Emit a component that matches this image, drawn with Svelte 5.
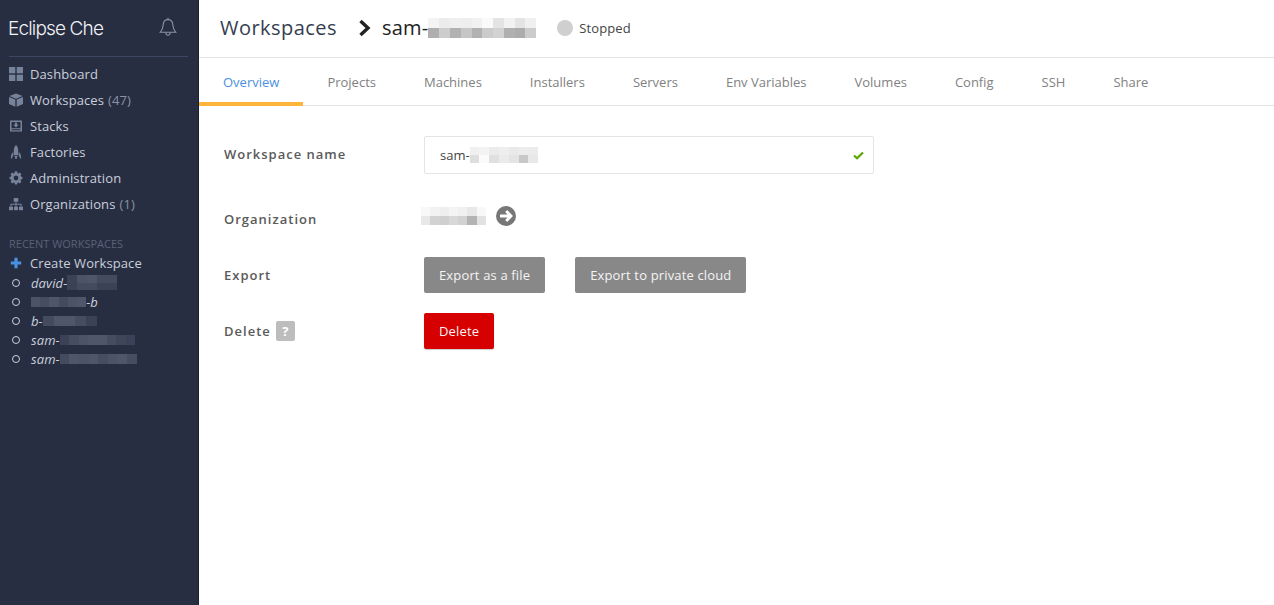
<script>
	const mainNav = [
		{ label: 'Dashboard', icon: 'dashboard' },
		{ label: 'Workspaces', count: '(47)', icon: 'cube' },
		{ label: 'Stacks', icon: 'stack' },
		{ label: 'Factories', icon: 'rocket' },
		{ label: 'Administration', icon: 'gear' },
		{ label: 'Organizations', count: '(1)', icon: 'org' }
	];

	const tabs = ['Overview', 'Projects', 'Machines', 'Installers', 'Servers', 'Env Variables', 'Volumes', 'Config', 'SSH', 'Share'];

	// blurred-out names: each row is a list of cell colours
	const dark = ['#3b4156', '#454b5f', '#4d5366', '#50566a', '#474d61', '#3f455a'];
	const recent = [
		{ before: 'david-', after: '', rows: [[dark[0], dark[2], dark[3], dark[1], dark[1]], [dark[0], dark[1], dark[1], dark[0], dark[0]]], w: 10, h: 7.5 },
		{ before: '', after: '-b', rows: [[dark[2], dark[4], dark[3], dark[1], dark[2], dark[3]]], w: 9.2, h: 10 },
		{ before: 'b-', after: '', rows: [[dark[1], dark[3], dark[3], dark[4], dark[0]]], w: 10.8, h: 10 },
		{ before: 'sam-', after: '', rows: [[dark[0], dark[4], dark[2], dark[3], dark[3], dark[4], dark[5], dark[0]]], w: 9.4, h: 10 },
		{ before: 'sam-', after: '', rows: [[dark[1], dark[3], dark[2], dark[3], dark[4], dark[2], dark[3], dark[4]]], w: 9.6, h: 10 }
	];

	const titleBlur = [
		['#f4f4f4', '#ececec', '#efefef', '#eeeeee', '#f2f2f2', '#fafafa', '#e4e4e4', '#f2f2f2', '#e4e4e4', '#f0f0f0'],
		['#afafaf', '#cdcdcd', '#b2b2b2', '#c6c6c6', '#b2b2b2', '#cbcbcb', '#d2d2d2', '#b0b0b0', '#acacac', '#cccccc']
	];
	const inputBlur = [
		['#f0f0f0', '#f3f3f3', '#ebebeb', '#eeeeee', '#e9e9e9', '#ececec', '#ebebeb'],
		['#dedede', '#fbfbfb', '#e0e0e0', '#ebebeb', '#e4e4e4', '#c8c8c8', '#e8e8e8']
	];
	const orgBlur = [
		['#f8f8f8', '#f2f2f2', '#eeeeee', '#f4f4f4', '#f0f0f0', '#e8e8e8', '#f8f8f8'],
		['#e8e8e8', '#d2d2d2', '#cfcfcf', '#d8d8d8', '#d2d2d2', '#b4b4b4', '#e2e2e2']
	];
</script>

{#snippet mosaic(rows, w, h)}
	<span class="mosaic">
		{#each rows as row}
			<span class="mosaic-row">
				{#each row as color}
					<i style="background:{color};width:{w}px;height:{h}px"></i>
				{/each}
			</span>
		{/each}
	</span>
{/snippet}

{#snippet navIcon(name)}
	<svg class="nav-icon" viewBox="0 0 14 14" width="14" height="14" fill="#76839a">
		{#if name === 'dashboard'}
			<rect x="0" y="0" width="6.3" height="6.3" />
			<rect x="7.7" y="0" width="6.3" height="6.3" />
			<rect x="0" y="7.7" width="6.3" height="6.3" />
			<rect x="7.7" y="7.7" width="6.3" height="6.3" />
		{:else if name === 'cube'}
			<path d="M7 0.4 13.6 3 7 5.7 0.4 3Z" />
			<path d="M0 4 6.3 6.6V13.8L0 10.9Z" />
			<path d="M14 4 7.7 6.6V13.8L14 10.9Z" />
		{:else if name === 'stack'}
			<path fill-rule="evenodd" d="M1.5 1.5H12.5Q13 1.5 13 2V12Q13 12.5 12.5 12.5H1.5Q1 12.5 1 12V2Q1 1.5 1.5 1.5ZM2.5 3V9.2H11.5V3ZM2.5 10.3V11.3H11.5V10.3Z" />
			<path d="M5.9 3.6H8.1V5.7H9.6L7 8.4 4.4 5.7H5.9Z" />
		{:else if name === 'rocket'}
			<path d="M7 0C8.6 1.6 9.2 3.6 9.2 5.6V10.2H4.8V5.6C4.8 3.6 5.4 1.6 7 0Z" />
			<path d="M4.2 6.8V10.6L2.8 13.6H1.8L2.4 9.6Z" />
			<path d="M9.8 6.8V10.6L11.2 13.6H12.2L11.6 9.6Z" />
			<path d="M5.6 11H8.4L7.6 14H6.4Z" />
		{:else if name === 'gear'}
			<path fill-rule="evenodd" d="M5.8 0.8H8.2L8.6 2.6 9.7 3.1 11.3 2.1 12.9 3.8 11.9 5.3 12.4 6.4 14 6.8V9.2L12.3 9.6 11.9 10.7 12.9 12.2 11.2 13.9 9.7 12.9 8.6 13.4 8.2 15H5.8L5.4 13.3 4.3 12.9 2.8 13.9 1.1 12.2 2.1 10.7 1.7 9.6 0 9.2V6.8L1.6 6.4 2.1 5.3 1.1 3.8 2.7 2.1 4.3 3.1 5.4 2.6ZM7 5.4A2.6 2.6 0 1 0 7 10.6 2.6 2.6 0 1 0 7 5.4Z" transform="scale(.92) translate(.6 -.4)" />
		{:else if name === 'org'}
			<rect x="4.7" y="1" width="4.6" height="3.8" />
			<rect x="0" y="9.6" width="4" height="3.6" />
			<rect x="5" y="9.6" width="4" height="3.6" />
			<rect x="10" y="9.6" width="4" height="3.6" />
			<path d="M6.5 4.8H7.5V6.7H12.5V9.6H11.5V7.7H7.5V9.6H6.5V7.7H2.5V9.6H1.5V6.7H6.5Z" />
		{/if}
	</svg>
{/snippet}

<div class="app">
	<aside class="sidebar">
		<div class="brand">
			<span class="logo">Eclipse Che</span>
			<svg class="bell" viewBox="0 0 20 20" width="20" height="20" fill="none" stroke="#8a92a4" stroke-width="1.1">
				<path d="M10 2.6C6.9 2.6 5.4 5 5.2 7.6 5 11 4.4 13 2.2 15.3H17.8C15.6 13 15 11 14.8 7.6 14.6 5 13.1 2.6 10 2.6Z" />
				<path d="M10 .8V2.6" />
				<path d="M7.8 15.5C8 17.3 8.9 18.3 10 18.3S12 17.3 12.2 15.5" />
			</svg>
		</div>

		<nav class="main-nav">
			{#each mainNav as item}
				<a href="#top">
					{@render navIcon(item.icon)}
					<span>{item.label}</span>
					{#if item.count}<em>{item.count}</em>{/if}
				</a>
			{/each}
		</nav>

		<div class="recent-title">RECENT WORKSPACES</div>
		<a class="create" href="#top">
			<svg viewBox="0 0 12 12" width="12" height="12" fill="#4a90e2"><path d="M4.4 .8H7.6V4.4H11.2V7.6H7.6V11.2H4.4V7.6H.8V4.4H4.4Z" /></svg>
			<span>Create Workspace</span>
		</a>
		<ul class="recent">
			{#each recent as ws}
				<li>
					<span class="ring"></span>
					<span class="ws-name">{ws.before}{@render mosaic(ws.rows, ws.w, ws.h)}{ws.after}</span>
				</li>
			{/each}
		</ul>
	</aside>

	<main>
		<header class="page-head">
			<h1>Workspaces</h1>
			<svg class="crumb" viewBox="0 0 14 18" width="14" height="18" fill="none" stroke="#222" stroke-width="3.4"><path d="M2.5 2 10 9 2.5 16" /></svg>
			<span class="ws-title">sam-{@render mosaic(titleBlur, 10.8, 10)}</span>
			<span class="status-dot"></span>
			<span class="status">Stopped</span>
		</header>

		<div class="tabs">
			{#each tabs as tab, i}
				<button class:active={i === 0}>{tab}</button>
			{/each}
		</div>

		<section class="form">
			<div class="row name-row">
				<div class="label">Workspace name</div>
				<div class="input">
					<span>sam-{@render mosaic(inputBlur, 9.8, 8)}</span>
					<svg viewBox="0 0 12 10" width="11" height="9" fill="none" stroke="#5aa700" stroke-width="2.4"><path d="M1 5 4.4 8 11 1.6" /></svg>
				</div>
			</div>

			<div class="row org-row">
				<div class="label">Organization</div>
				<div class="org-value">
					{@render mosaic(orgBlur, 9.3, 9)}
					<svg viewBox="0 0 20 20" width="20" height="20"><circle cx="10" cy="10" r="10" fill="#777" /><path d="M4 10H14.5M10.2 5 15 10 10.2 15" fill="none" stroke="#fff" stroke-width="2.8" /></svg>
				</div>
			</div>

			<div class="row">
				<div class="label">Export</div>
				<div class="buttons">
					<button class="btn">Export as a file</button>
					<button class="btn">Export to private cloud</button>
				</div>
			</div>

			<div class="row">
				<div class="label">Delete <span class="help">?</span></div>
				<div class="buttons">
					<button class="btn danger">Delete</button>
				</div>
			</div>
		</section>
	</main>
</div>

<style>
	:global(body) {
		margin: 0;
		background: #fff;
	}

	.app {
		display: flex;
		height: 605px;
		font-family: 'Open Sans', 'Noto Sans', sans-serif;
		font-size: 13px;
		overflow: hidden;
	}

	.sidebar {
		flex: 0 0 199px;
		box-sizing: border-box;
		background: #282e42;
		border-right: 1px solid #1b2030;
		color: #c9cfdb;
	}

	.brand {
		display: flex;
		align-items: center;
		justify-content: space-between;
		height: 57px;
		margin: 0 10px 0 9px;
		border-bottom: 1px solid #3a4663;
		box-sizing: border-box;
	}

	.logo {
		margin-left: -1px;
		font-family: 'Inter', 'Liberation Sans', sans-serif;
		font-weight: 300;
		font-size: 19px;
		letter-spacing: -0.85px;
		color: #f2f3f5;
	}

	.bell {
		margin-right: 10px;
		margin-top: -3px;
	}

	.main-nav {
		display: flex;
		flex-direction: column;
		margin-top: 4px;
	}

	.main-nav a,
	.create {
		display: flex;
		align-items: center;
		height: 26px;
		padding-left: 9px;
		color: #c9cfdb;
		text-decoration: none;
		letter-spacing: 0.1px;
	}

	.nav-icon {
		flex: none;
		margin-right: 7px;
	}

	.main-nav em {
		font-style: normal;
		margin-left: 4px;
		color: #8a92a4;
	}

	.recent-title {
		margin-top: 19px;
		padding-left: 9px;
		font-size: 11px;
		line-height: 16px;
		color: #5a6178;
	}

	.create {
		height: 19px;
		margin-top: 1px;
	}

	.create svg {
		flex: none;
		margin-right: 8px;
		margin-left: 1px;
	}

	.recent {
		list-style: none;
		margin: 1px 0 0;
		padding: 0;
	}

	.recent li {
		display: flex;
		align-items: center;
		height: 19px;
		padding-left: 12px;
	}

	.ring {
		flex: none;
		box-sizing: border-box;
		width: 8px;
		height: 8px;
		border: 1.5px solid #c9cfdb;
		border-radius: 50%;
		margin-right: 11px;
	}

	.ws-name {
		display: inline-flex;
		align-items: center;
		font-style: italic;
		letter-spacing: 0.1px;
		color: #c9cfdb;
	}

	.mosaic {
		display: inline-flex;
		flex-direction: column;
		vertical-align: middle;
	}

	.mosaic-row {
		display: flex;
	}

	.mosaic i {
		display: block;
		flex: none;
	}

	main {
		flex: 1;
		min-width: 0;
	}

	.page-head {
		display: flex;
		align-items: center;
		box-sizing: border-box;
		height: 58px;
		padding: 0 0 2px 21px;
		border-bottom: 1px solid #e4e4e4;
	}

	h1 {
		margin: 0;
		font-size: 20px;
		font-weight: 400;
		color: #353e50;
		letter-spacing: 0.45px;
	}

	.crumb {
		margin-left: 21px;
	}

	.ws-title {
		display: inline-flex;
		align-items: center;
		margin-left: 10px;
		font-size: 20px;
		letter-spacing: 0.2px;
		color: #222;
	}

	.status-dot {
		width: 16px;
		height: 16px;
		margin-left: 21px;
		border-radius: 50%;
		background: #cfcfcf;
	}

	.status {
		margin-left: 6px;
		letter-spacing: 0.1px;
		color: #444;
	}

	.tabs {
		display: flex;
		box-sizing: border-box;
		height: 48px;
		border-bottom: 1px solid #e4e4e4;
	}

	.tabs button {
		box-sizing: border-box;
		height: 48px;
		padding: 4px 24px 0;
		border: 0;
		border-bottom: 4px solid transparent;
		background: none;
		font: inherit;
		color: #818181;
		cursor: pointer;
	}

	.tabs button.active {
		color: #4a90e2;
		border-bottom-color: #ffb43c;
	}

	.form {
		padding: 30px 0 0 25px;
	}

	.row {
		display: grid;
		grid-template-columns: 200px 1fr;
		align-items: center;
		margin-bottom: 20px;
	}

	.name-row {
		margin-bottom: 27px;
	}

	.name-row .label {
		padding-bottom: 2px;
	}

	.label {
		display: flex;
		align-items: center;
		font-weight: 600;
		letter-spacing: 1px;
		color: #5a5a5a;
	}

	.help {
		display: inline-block;
		width: 19px;
		height: 20px;
		margin-left: 5px;
		border-radius: 2px;
		background: #bdbdbd;
		color: #fff;
		font-weight: 700;
		line-height: 20px;
		text-align: center;
		letter-spacing: 0;
	}

	.input {
		display: flex;
		align-items: center;
		justify-content: space-between;
		box-sizing: border-box;
		width: 450px;
		height: 38px;
		padding: 0 9px 0 15px;
		border: 1px solid #e4e4e4;
		border-radius: 2px;
		color: #444;
	}

	.input span {
		display: inline-flex;
		align-items: center;
	}

	.org-row {
		height: 36px;
	}

	.org-value {
		display: flex;
		align-items: center;
		gap: 10px;
		margin-top: -6px;
		margin-left: -3px;
	}

	.buttons {
		display: flex;
		gap: 30px;
	}

	.btn {
		height: 36px;
		padding: 0 15px;
		border: 0;
		border-radius: 2px;
		background: #888;
		font: inherit;
		color: #f4f4f4;
		letter-spacing: 0.15px;
		cursor: pointer;
	}

	.danger {
		background: #d70000;
		box-shadow: 0 1px 1px rgba(0, 0, 0, 0.2);
	}
</style>
